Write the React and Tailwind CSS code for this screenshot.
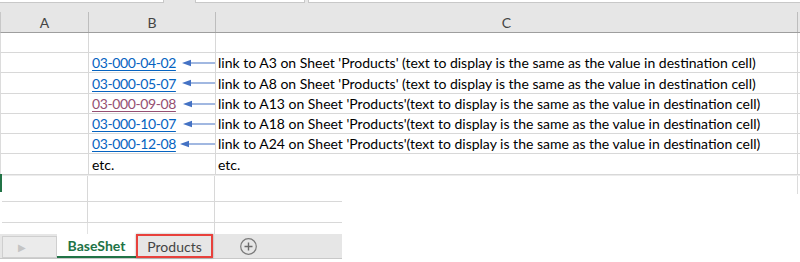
import React from 'react';

const rows = [
  { h: 'h-[20px]' },
  { h: 'h-[20px]', code: '03-000-04-02', w: 33, note: "link to A3 on Sheet 'Products' (text to display is the same as the value in destination cell)" },
  { h: 'h-[21px]', code: '03-000-05-07', w: 33, note: "link to A8 on Sheet 'Products' (text to display is the same as the value in destination cell)" },
  { h: 'h-[20px]', code: '03-000-09-08', w: 32, visited: true, note: "link to A13 on Sheet 'Products'(text to display is the same as the value in destination cell)" },
  { h: 'h-[20px]', code: '03-000-10-07', w: 32, note: "link to A18 on Sheet 'Products'(text to display is the same as the value in destination cell)" },
  { h: 'h-[20px]', code: '03-000-12-08', w: 35, note: "link to A24 on Sheet 'Products'(text to display is the same as the value in destination cell)" },
  { h: 'h-[21px]', etc: true },
];

function Arrow({ w }) {
  return (
    <svg width={w} height="10" viewBox={`0 0 ${w} 10`} className="shrink-0">
      <rect x="8" y="4.5" width={w - 8} height="1" fill="#4472c4" />
      <polygon points="0,5 9,1.8 9,8.2" fill="#4472c4" />
    </svg>
  );
}

export default function App() {
  return (
    <div
      className="relative w-[800px] h-[262px] overflow-hidden bg-white flex flex-col text-[14px] text-black"
      style={{ fontFamily: 'Lato, "Open Sans", sans-serif' }}
    >
      {/* formula bar remnant */}
      <div className="h-[12px] bg-[#e6e6e6] flex items-start shrink-0">
        <div className="w-[164px] h-[3px] bg-white border-b border-r border-[#c8c8c8]" />
        <div className="w-[31px]" />
        <div className="w-[110px] h-[3px] bg-white border-b border-x border-[#c8c8c8]" />
        <div className="w-[3px]" />
        <div className="flex-1 h-[3px] bg-white border-b border-l border-[#c8c8c8]" />
      </div>

      {/* column headers */}
      <div className="flex h-[21px] shrink-0 bg-[#e6e6e6] border-b border-[#9e9e9e] border-l border-l-[#c8c8c8] text-[#444]">
        <div className="w-[88px] border-r border-[#bdbdbd] flex items-center justify-center">A</div>
        <div className="w-[127px] border-r border-[#bdbdbd] flex items-center justify-center">B</div>
        <div className="w-[582px] border-r border-[#bdbdbd] flex items-center justify-center">C</div>
      </div>

      {/* grid rows */}
      {rows.map((r, i) => (
        <div key={i} className={`flex ${r.h} shrink-0 border-b border-[#d8d8d8] border-l border-l-[#dcdcdc]`}>
          <div className="w-[88px] border-r border-[#d8d8d8]" />
          <div className="w-[127px] border-r border-[#d8d8d8] flex items-center pl-[3px] whitespace-nowrap">
            {r.code && (
              <>
                <span className={`underline underline-offset-[2px] tracking-[-0.4px] ${r.visited ? 'text-[#954f72]' : 'text-[#0563c1]'}`}>{r.code}</span>
                <span className="ml-auto flex items-center">
                  <Arrow w={r.w} />
                </span>
              </>
            )}
            {r.etc && <span>etc.</span>}
          </div>
          <div className="w-[582px] border-r border-[#d8d8d8] flex items-center pl-[2px] whitespace-nowrap">
            {r.note}
            {r.etc && 'etc.'}
          </div>
        </div>
      ))}

      {/* lower part: partial grid + sheet tabs */}
      <div className="flex flex-1 border-t border-[#ececec]">
        <div className="w-[342px] flex flex-col">
          <div className="flex h-[26px] border-b border-[#d8d8d8] ml-[2px]">
            <div className="w-[86px] border-r border-[#d8d8d8]" />
            <div className="w-[127px] border-r border-[#d8d8d8]" />
          </div>
          <div className="flex h-[21px] border-b border-[#d8d8d8] ml-[2px]">
            <div className="w-[86px] border-r border-[#d8d8d8]" />
            <div className="w-[127px] border-r border-[#d8d8d8]" />
          </div>
          <div className="flex h-[11px] ml-[2px]">
            <div className="w-[86px] border-r border-[#e2e2e2]" />
            <div className="w-[127px] border-r border-[#d8d8d8]" />
          </div>

          {/* sheet tab bar */}
          <div className="h-[25px] bg-[#e6e6e6] border-b border-[#c8c8c8] flex items-stretch">
            <div className="w-[55px] ml-[2px] mt-[2px] bg-[#ebebeb] border border-[#cfcfcf] flex items-center pl-[15px] text-[10px] text-[#c4c4c4]">
              ▶
            </div>
            <div className="w-[79px] bg-white border-b-2 border-[#217346] flex items-center justify-center font-bold text-[#217346]">
              BaseShet
            </div>
            <div className="w-[77px] border-2 border-[#e8413c] shadow-[0_0_2px_rgba(0,0,0,0.35)] flex items-center justify-center text-[#444]">
              Products
            </div>
            <div className="flex items-center ml-[27px]">
              <svg width="17" height="17" viewBox="0 0 17 17">
                <circle cx="8.5" cy="8.5" r="7.8" fill="none" stroke="#7a7a7a" strokeWidth="1.2" />
                <path d="M4.5 8.5h8M8.5 4.5v8" stroke="#6a6a6a" strokeWidth="1.4" />
              </svg>
            </div>
          </div>
        </div>
        <div className="flex-1 flex justify-end">
          <div className="w-[3px] h-[18px] border-l border-[#dcdcdc]" />
        </div>
      </div>

      {/* green row marker */}
      <div className="absolute left-0 top-[174px] w-[2px] h-[18px] bg-[#217346]" />
    </div>
  );
}
